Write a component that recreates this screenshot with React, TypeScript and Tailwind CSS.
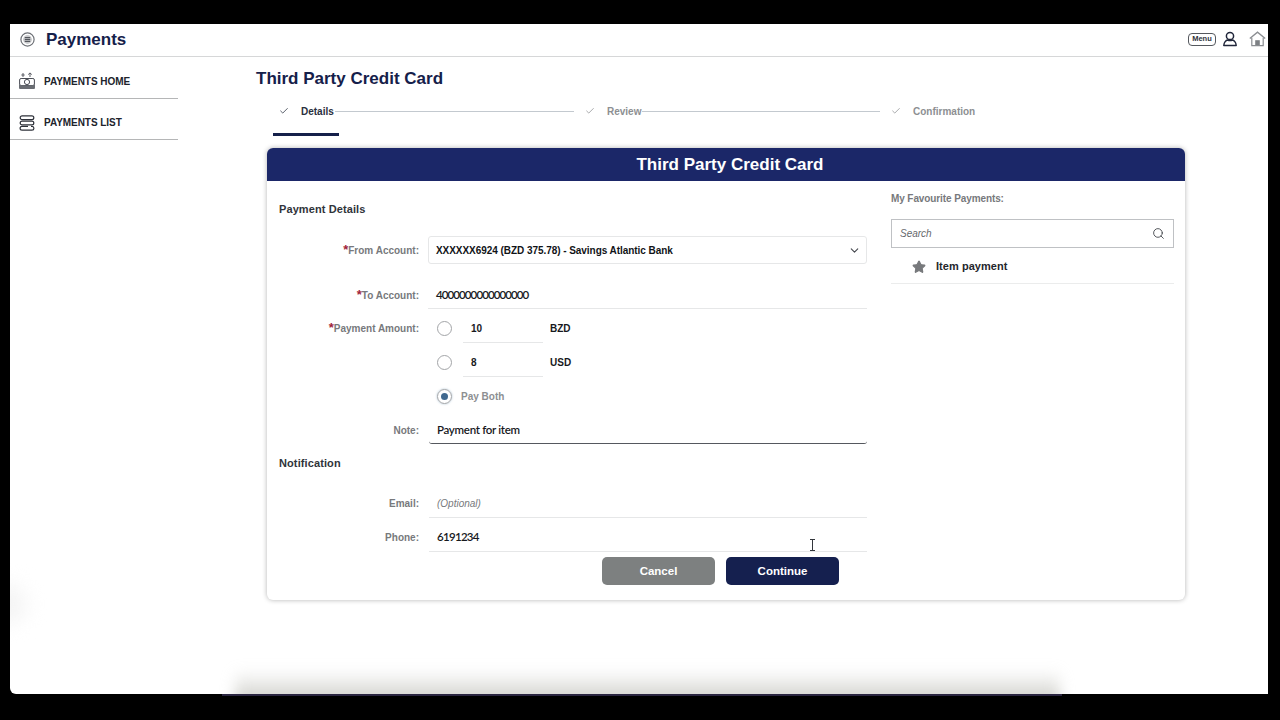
import React from "react";
import { Check, ChevronDown, Search, Star } from "lucide-react";

const LABEL = "w-[140px] shrink-0 text-right text-[10px] font-bold text-[#77797c]";

function Req() {
  return <span className="text-[13px] leading-none text-[#a0243a]">*</span>;
}

function Step({ label, active, width }: { label: string; active?: boolean; width: string }) {
  return (
    <div className={`flex items-center ${width}`}>
      <Check size={10} strokeWidth={1.8} className={active ? "ml-[6px] text-[#222a3a]" : "ml-[6px] text-[#8b8d90]"} />
      <span className={`ml-[12px] text-[10px] font-bold ${active ? "text-[#2a3040]" : "text-[#8d8f92]"}`}>{label}</span>
      {width !== "w-auto" && <div className="ml-px h-px flex-1 bg-[#c3c9cf]" />}
    </div>
  );
}

function AmountRow({ value, unit }: { value: string; unit: string }) {
  return (
    <div className="ml-[149px] mt-[5px] flex h-[29px] items-center pl-[9px]">
      <span className="h-[15px] w-[15px] rounded-full border border-[#a3a5a8] bg-white" />
      <span className="ml-[11px] flex h-[29px] w-[80px] items-center border-b border-[#e6e7e8] pl-[8px] text-[10px] font-bold text-[#17191d]">{value}</span>
      <span className="ml-[7px] text-[10px] font-bold text-[#17191d]">{unit}</span>
    </div>
  );
}

export default function App() {
  return (
    <div className="h-[720px] w-[1280px] overflow-hidden bg-black pl-[10px] pt-[24px] font-['Liberation_Sans',Arial,sans-serif]">
      <div className="relative h-[670px] w-[1258px] overflow-hidden rounded-bl-[6px] bg-white">
        {/* Top bar */}
        <header className="flex h-[33px] items-center border-b border-[#d6d7d8] pl-[10px] pr-[2px]">
          <svg width="15" height="15" viewBox="0 0 15 15" fill="none" className="mb-[2px] shrink-0">
            <circle cx="7.5" cy="7.5" r="6.6" stroke="#6d7076" strokeWidth="1.2" />
            <circle cx="7.5" cy="7.5" r="4.4" fill="#c9cacc" />
            <path d="M4.8 5.6h5.4M4.8 7.5h5.4M4.8 9.4h5.4" stroke="#55585e" strokeWidth="1.1" />
          </svg>
          <h1 className="ml-[11px] text-[17px] font-bold text-[#15204a]">Payments</h1>
          <div className="mb-[2px] ml-auto flex items-center">
            <span className="mr-px flex h-[13px] w-[28px] items-center justify-center rounded-[4px] border border-[#55585e] text-[7.5px] font-bold text-[#30343c]">Menu</span>
            <svg width="16" height="16" viewBox="0 0 16 16" fill="none" className="ml-[5px]">
              <circle cx="8" cy="5" r="3.6" stroke="#20263a" strokeWidth="1.5" />
              <path d="M1.8 14.6c0-3.4 2.4-5.4 3.8-5.6 1.4.6 3.4.6 4.8 0 1.4.2 3.8 2.2 3.8 5.6z" stroke="#20263a" strokeWidth="1.5" strokeLinejoin="round" />
            </svg>
            <svg width="17" height="16" viewBox="0 0 17 16" fill="none" className="ml-[11px]">
              <path d="M.8 7.6 8.5 1.2l7.7 6.4" stroke="#8a8d91" strokeWidth="1.3" />
              <path d="M2.8 6.8v7.9h11.4V6.8" stroke="#8a8d91" strokeWidth="1.2" />
              <rect x="6.2" y="9.2" width="4.6" height="4.8" fill="#7d8084" />
            </svg>
          </div>
        </header>

        <div className="flex">
          {/* Sidebar */}
          <aside className="w-[168px] shrink-0">
            <div className="flex h-[42px] items-center border-b border-[#b5b6b7] pl-[9px] pt-[7px]">
              <svg width="16" height="18" viewBox="0 0 16 18" fill="none" className="shrink-0">
                <path d="M4 1v4M2.3 3h3.4M11 5V1M9.2 2.6 11 .9l1.8 1.7" stroke="#4a4d55" strokeWidth=".9" />
                <rect x=".6" y="6.5" width="14.8" height="7" rx="1.5" stroke="#4a4d55" strokeWidth="1" />
                <circle cx="8" cy="10" r="2.6" stroke="#4a4d55" strokeWidth="1" />
                <path d="M0 12.5c2 1.2 14 1.2 16 0V16a1 1 0 0 1-1 1H1a1 1 0 0 1-1-1z" fill="#6a6d73" />
              </svg>
              <span className="ml-[9px] text-[10px] font-bold tracking-[-0.05px] text-[#20232b]">PAYMENTS HOME</span>
            </div>
            <div className="flex h-[41px] items-center border-b border-[#b5b6b7] pl-[9px] pt-[7px]">
              <svg width="16" height="16" viewBox="0 0 16 16" fill="none" className="shrink-0">
                <rect x="1.2" y=".8" width="13.6" height="3.8" rx="1.9" stroke="#2f323a" strokeWidth="1.2" />
                <rect x="1.2" y="6.1" width="13.6" height="3.8" rx="1.9" stroke="#2f323a" strokeWidth="1.2" />
                <path d="M12 11.4h1a1.9 1.9 0 0 1 0 3.8H3a1.9 1.9 0 0 1 0-3.8h6" stroke="#2f323a" strokeWidth="1.2" />
              </svg>
              <span className="ml-[9px] text-[10px] font-bold tracking-[-0.05px] text-[#20232b]">PAYMENTS LIST</span>
            </div>
          </aside>

          {/* Main */}
          <main className="w-[1090px] shrink-0">
            <h2 className="ml-[78px] mt-[10px] h-[22px] text-[17px] font-bold leading-[23px] text-[#15204a]">Third Party Credit Card</h2>
            <div className="ml-[95px] mt-[12px] flex h-[46px] w-[710px] flex-col">
              <div className="flex h-[20px] items-center">
                <Step label="Details" active width="w-[301px]" />
                <div className="w-[5px]" />
                <Step label="Review" width="w-[301px]" />
                <div className="w-[5px]" />
                <Step label="Confirmation" width="w-auto" />
              </div>
              <div className="mt-[12px] h-[3px] w-[66px] bg-[#15204a]" />
            </div>

            {/* Card */}
            <section className="ml-[89px] mt-[1px] h-[452px] w-[918px] overflow-hidden rounded-[6px] bg-white shadow-[0_0_5px_rgba(0,0,0,0.3)]">
              <div className="flex h-[33px] items-center justify-center bg-[#1b2768] pl-[8px] text-[17px] font-bold text-white">Third Party Credit Card</div>
              <div className="flex">
                {/* Form */}
                <div className="w-[600px] shrink-0 pl-[12px]">
                  <h3 className="mt-[20px] h-[18px] text-[11px] font-bold leading-[17px] tracking-[0.1px] text-[#30343a]">Payment Details</h3>

                  <div className="mt-[17px] flex h-[28px] items-center">
                    <span className={LABEL}><Req />From Account:</span>
                    <div className="ml-[9px] flex h-[28px] w-[439px] items-center justify-between rounded-[3px] border border-[#e6e7e8] pl-[7px] pr-[5px] text-[10px] font-bold tracking-[-0.05px] text-[#111317]">
                      <span>XXXXXX6924 (BZD 375.78) - Savings Atlantic Bank</span>
                      <ChevronDown size={13} className="text-[#44474d]" />
                    </div>
                  </div>

                  <div className="mt-[17px] flex h-[28px] items-center">
                    <span className={LABEL}><Req />To Account:</span>
                    <div className="ml-[9px] flex h-[28px] w-[439px] items-center border-b border-[#e6e7e8] pl-[8px] font-['Lato',sans-serif] text-[11.5px] font-semibold tracking-[-0.9px] text-[#17191d]">4000000000000000</div>
                  </div>

                  <div className="relative">
                    <span className={`${LABEL} absolute left-0 top-[7px]`}><Req />Payment Amount:</span>
                    <AmountRow value="10" unit="BZD" />
                    <AmountRow value="8" unit="USD" />
                  </div>

                  <div className="ml-[149px] mt-[5px] flex h-[29px] items-center pl-[9px]">
                    <span className="flex h-[15px] w-[15px] items-center justify-center rounded-full border border-[#a3a5a8] shadow-[0_0_2px_rgba(60,110,150,0.5)]">
                      <span className="h-[7px] w-[7px] rounded-full bg-[#41698f]" />
                    </span>
                    <span className="ml-[9px] text-[10px] font-bold text-[#8d8f92]">Pay Both</span>
                  </div>

                  <div className="mt-[5px] flex h-[28px] items-center">
                    <span className={LABEL}>Note:</span>
                    <div className="ml-[10px] flex h-[28px] w-[438px] items-center rounded-b-[3px] border-b border-[#55585e] pl-[8px] font-['Lato',sans-serif] text-[11.5px] font-semibold tracking-[-0.3px] text-[#17191d]">Payment for item</div>
                  </div>

                  <h3 className="mt-[10px] h-[18px] text-[11px] font-bold leading-[18px] tracking-[0.1px] text-[#30343a]">Notification</h3>

                  <div className="mt-[17px] flex h-[29px] items-center">
                    <span className={LABEL}>Email:</span>
                    <div className="ml-[10px] flex h-[29px] w-[438px] items-center border-b border-[#e6e7e8] pl-[8px] text-[10px] italic text-[#77797c]">(Optional)</div>
                  </div>

                  <div className="mt-[5px] flex h-[29px] items-center">
                    <span className={LABEL}>Phone:</span>
                    <div className="ml-[10px] flex h-[29px] w-[438px] items-center border-b border-[#e6e7e8] pl-[8px] font-['Lato',sans-serif] text-[11.5px] font-semibold tracking-[-0.7px] text-[#17191d]">6191234</div>
                  </div>

                  <div className="ml-[323px] mt-[5px] flex gap-[11px]">
                    <button className="h-[28px] w-[113px] rounded-[5px] bg-[#7d8080] pt-px text-[11.5px] font-bold text-white">Cancel</button>
                    <button className="h-[28px] w-[113px] rounded-[5px] bg-[#15204f] pt-px text-[11.5px] font-bold text-white">Continue</button>
                  </div>
                </div>

                {/* Favourites */}
                <div className="ml-[24px] w-[283px] shrink-0">
                  <p className="mt-[10px] h-[15px] text-[10px] font-bold leading-[15px] tracking-[-0.1px] text-[#77797c]">My Favourite Payments:</p>
                  <div className="mt-[13px] flex h-[29px] items-center justify-between border border-[#bfc1c4] pl-[8px] pr-[8px]">
                    <span className="text-[10px] italic text-[#66686c]">Search</span>
                    <Search size={13} strokeWidth={1.5} className="text-[#30343a]" />
                  </div>
                  <div className="flex h-[36px] items-center border-b border-[#ebecec] pl-[21px] pt-[2px]">
                    <Star size={14} className="fill-[#77797c] text-[#77797c]" />
                    <span className="ml-[10px] text-[11px] font-bold tracking-[0.05px] text-[#25272c]">Item payment</span>
                  </div>
                </div>
              </div>
            </section>
          </main>
        </div>

        {/* Mouse cursor */}
        <svg width="7" height="12" viewBox="0 0 7 12" fill="none" className="absolute left-[799px] top-[515px]">
          <path d="M1 .5h5M3.5.5v11M1 11.5h5" stroke="#33363c" strokeWidth="1" />
        </svg>

        {/* Blurred video shadows */}
        <div className="absolute bottom-[-12px] left-[225px] h-[36px] w-[825px] bg-gradient-to-b from-transparent to-[#c8c8c2] blur-[7px]" />
        <div className="absolute bottom-[70px] left-[-24px] h-[40px] w-[40px] rounded-full bg-[#f4f4f4] blur-[10px]" />
      </div>
      <div className="ml-[212px] h-[2px] w-[840px] bg-[#2a2540]" />
    </div>
  );
}
